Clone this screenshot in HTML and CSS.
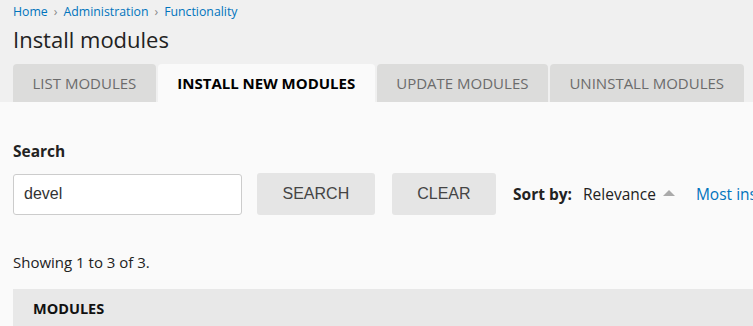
FILE: index.html
```html
<html>
	<head>
		<title>Install modules</title>
		<link rel="stylesheet" href="styles.css">
	</head>
	<body>
		<div class="header">
			<div class="breadcrumb">
				<a href="#">Home</a><span class="sep">&#8250;</span><a href="#">Administration</a><span class="sep">&#8250;</span><a href="#">Functionality</a>
			</div>
			<h1 class="pagetitle">Install modules</h1>
			<ul class="tabs">
				<li><a href="#">List modules</a></li>
				<li class="active"><a href="#">Install new modules</a></li>
				<li><a href="#">Update modules</a></li>
				<li><a href="#">Uninstall modules</a></li>
			</ul>
		</div>
		<div class="content">
			<div class="searchlabel">Search</div>
			<div class="searchrow">
				<input class="searchinput" type="text" value="devel">
				<button class="btn">Search</button>
				<button class="btn">Clear</button>
				<div class="sort">
					<b>Sort by:</b>
					<span class="current">Relevance</span>
					<span class="arrow"></span>
					<a href="#" class="sortlink">Most installed</a>
				</div>
			</div>
			<div class="count">Showing 1 to 3 of 3.</div>
			<div class="tablehead">Modules</div>
		</div>
	</body>
</html>
```

FILE: styles.css
```css
body{
	margin: 0;
	font-family: "Open Sans", sans-serif;
	font-size: 15.5px;
	color: #222;
	background-color: #fafafa;
	overflow: hidden;
	white-space: nowrap;
}
a{
	text-decoration: none;
	color: #0074bd;
}

/* header area: breadcrumb, title and tabs */
div.header{
	background-color: #f0f0f0;
	padding: 3px 0 0 13px;
}
div.breadcrumb{
	font-size: 12.3px;
	height: 17px;
	line-height: 17px;
}
span.sep{
	color: #888;
	margin: 0 6px;
}
h1.pagetitle{
	font-size: 22px;
	font-weight: normal;
	margin: 0;
	padding-top: 5px;
	height: 39px;
	line-height: 29px;
}
ul.tabs{
	list-style: none;
	margin: 0;
	padding: 0;
	display: flex;
	gap: 2px;
}
ul.tabs li a{
	display: block;
	height: 38px;
	line-height: 38px;
	padding: 0 19.5px;
	background-color: #dcdcdb;
	color: #6b6b6b;
	text-transform: uppercase;
	font-size: 15px;
	border-radius: 4px 4px 0 0;
}
ul.tabs li.active a{
	background-color: #fafafa;
	color: #000;
	font-weight: bold;
}

/* content */
div.content{
	padding: 0 0 0 13px;
}
div.searchlabel{
	font-weight: bold;
	padding-top: 38px;
	height: 33px;
	line-height: 23px;
}
div.searchrow{
	display: flex;
	align-items: center;
	height: 42px;
	overflow: hidden;
}
input.searchinput{
	flex-shrink: 0;
	width: 229px;
	height: 41px;
	box-sizing: border-box;
	border: 1px solid #cccccc;
	border-radius: 3px;
	background: white;
	padding: 0 10px;
	font-family: "Liberation Sans", Arial, sans-serif;
	font-size: 16px;
	color: #333;
	margin-right: 15px;
}
button.btn{
	flex-shrink: 0;
	height: 42px;
	padding: 0 25.5px;
	border: none;
	border-radius: 3px;
	background-color: #e5e5e5;
	color: #444;
	font-family: "Liberation Sans", Arial, sans-serif;
	font-size: 16px;
	text-transform: uppercase;
	margin-right: 17px;
}
div.sort{
	display: flex;
	align-items: center;
	min-width: 0;
	overflow: hidden;
}
div.sort b{
	margin-right: 11px;
}
span.arrow{
	flex-shrink: 0;
	width: 0;
	height: 0;
	border-left: 6px solid transparent;
	border-right: 6px solid transparent;
	border-bottom: 6px solid #aaa;
	margin: 0 21px 2px 7px;
}
div.count{
	font-size: 15px;
	padding-top: 36px;
	height: 38px;
	line-height: 22px;
}
div.tablehead{
	background-color: #e8e8e8;
	height: 40px;
	line-height: 40px;
	padding-left: 20px;
	font-size: 14.5px;
	font-weight: bold;
	text-transform: uppercase;
	color: #111;
}
```
